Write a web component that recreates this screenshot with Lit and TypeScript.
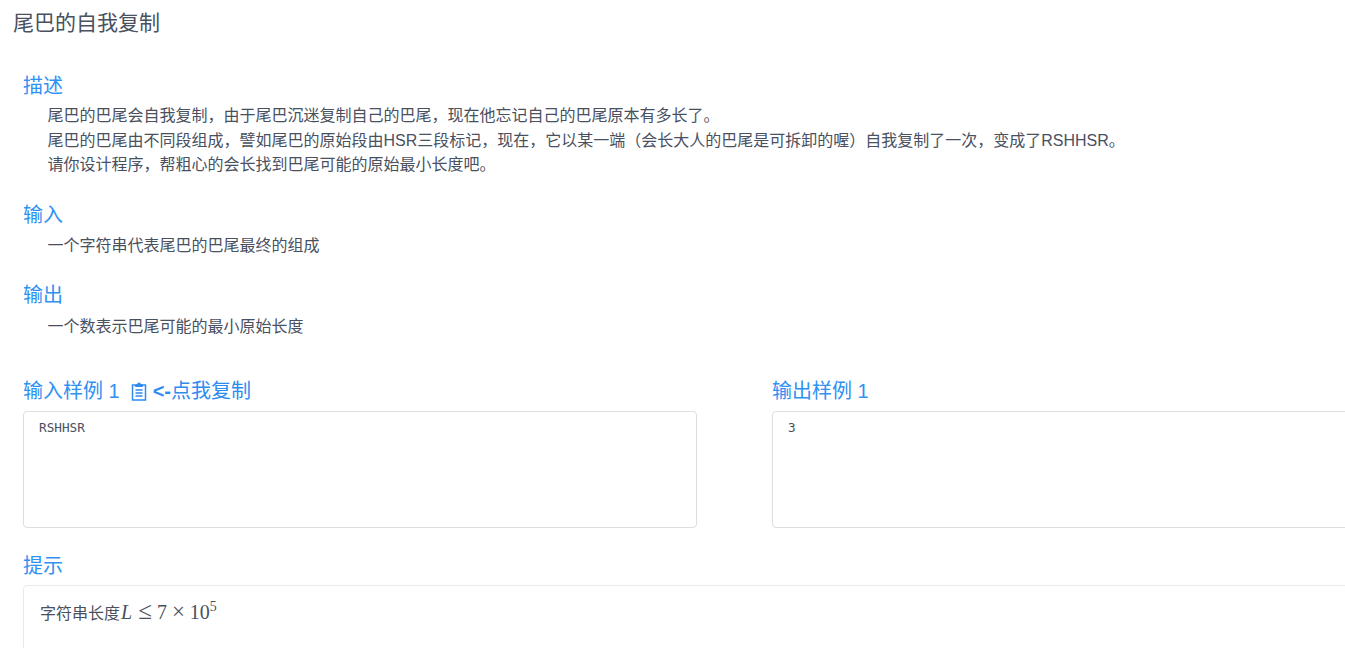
import { LitElement, html, css } from "lit";
import { customElement } from "lit/decorators.js";

@customElement("app-root")
export class AppRoot extends LitElement {
  static styles = css`
    :host {
      display: block;
      width: 1345px;
      height: 648px;
      overflow: hidden;
      background: #fff;
      color: #495060;
      font-family: "Liberation Sans", "Noto Sans CJK SC", sans-serif;
      font-size: 16px;
    }
    .title {
      margin: 0;
      padding: 11px 0 0 13px;
      font-size: 21px;
      font-weight: 400;
      line-height: 24px;
      color: #495060;
    }
    .main {
      width: 1423px;
      padding: 39px 0 0 23px;
    }
    h2 {
      margin: 0;
      font-size: 20px;
      font-weight: 400;
      line-height: 24px;
      color: #3091f2;
    }
    .text {
      margin: 0 0 0 24.5px;
      padding-top: 6px;
      font-size: 16px;
      line-height: 24.5px;
    }
    .text.single {
      padding-top: 7px;
      line-height: 25px;
    }
    .sec-input .text.single {
      padding: 6px 0 1px;
    }
    .text p {
      margin: 0;
    }
    .sec-input { margin-top: 25px; }
    .sec-output { margin-top: 24.5px; }
    .samples {
      display: grid;
      grid-template-columns: 674px 674px;
      column-gap: 75px;
      margin-top: 39.5px;
    }
    .copy {
      display: inline-flex;
      align-items: center;
      margin-left: 9px;
      color: #2d8cf0;
      vertical-align: top;
    }
    .copy svg {
      width: 20px;
      height: 20px;
      margin-right: 4px;
    }
    .arrow {
      font-weight: 700;
    }
    .box {
      box-sizing: border-box;
      height: 117px;
      margin-top: 8px;
      padding: 8px 15px;
      border: 1px solid #dddee1;
      border-radius: 4px;
      font-family: "DejaVu Sans Mono", "Liberation Mono", monospace;
      font-size: 12.7px;
      line-height: 15px;
      color: #495060;
    }
    .sec-hint { margin-top: 26px; }
    .hint {
      box-sizing: border-box;
      height: 90px;
      margin-top: 7px;
      padding: 13px 16px;
      border: 1px solid #e9eaec;
      border-radius: 4px;
      font-size: 16px;
      line-height: 27px;
    }
    .math {
      font-family: "Liberation Serif", serif;
      font-size: 20px;
      color: #495060;
    }
    .math i { margin: 0 2px 0 1px; }
    .math .le { margin: 0 5px 0 4px; font-size: 25px; line-height: 0; }
    .math .times { margin: 0 5px; font-size: 23px; line-height: 0; }
    .math sup {
      font-size: 14px;
      line-height: 0;
      vertical-align: 8px;
    }
  `;

  render() {
    return html`
      <h1 class="title">尾巴的自我复制</h1>
      <div class="main">
        <section>
          <h2>描述</h2>
          <div class="text">
            <p>尾巴的巴尾会自我复制，由于尾巴沉迷复制自己的巴尾，现在他忘记自己的巴尾原本有多长了。</p>
            <p>尾巴的巴尾由不同段组成，譬如尾巴的原始段由HSR三段标记，现在，它以某一端（会长大人的巴尾是可拆卸的喔）自我复制了一次，变成了RSHHSR。</p>
            <p>请你设计程序，帮粗心的会长找到巴尾可能的原始最小长度吧。</p>
          </div>
        </section>
        <section class="sec-input">
          <h2>输入</h2>
          <div class="text single">一个字符串代表尾巴的巴尾最终的组成</div>
        </section>
        <section class="sec-output">
          <h2>输出</h2>
          <div class="text single">一个数表示巴尾可能的最小原始长度</div>
        </section>
        <div class="samples">
          <div>
            <h2>输入样例 1<span class="copy"><svg viewBox="0 0 20 20" fill="none" stroke="currentColor" stroke-width="1.5"><path d="M6 4H3.5v15h13V4H14"/><path d="M6.5 5.5h7V3.5h-2a1.5 1.5 0 0 0-3 0h-2z" fill="currentColor" stroke-width="1"/><path d="M6.5 9h7M6.5 12h7M6.5 15h7" stroke-width="1.3"/></svg><span class="arrow">&lt;-</span>点我复制</span></h2>
            <div class="box">RSHHSR</div>
          </div>
          <div>
            <h2>输出样例 1</h2>
            <div class="box">3</div>
          </div>
        </div>
        <section class="sec-hint">
          <h2>提示</h2>
          <div class="hint">字符串长度<span class="math"><i>L</i><span class="le">≤</span>7<span class="times">×</span>10<sup>5</sup></span></div>
        </section>
      </div>
    `;
  }
}
